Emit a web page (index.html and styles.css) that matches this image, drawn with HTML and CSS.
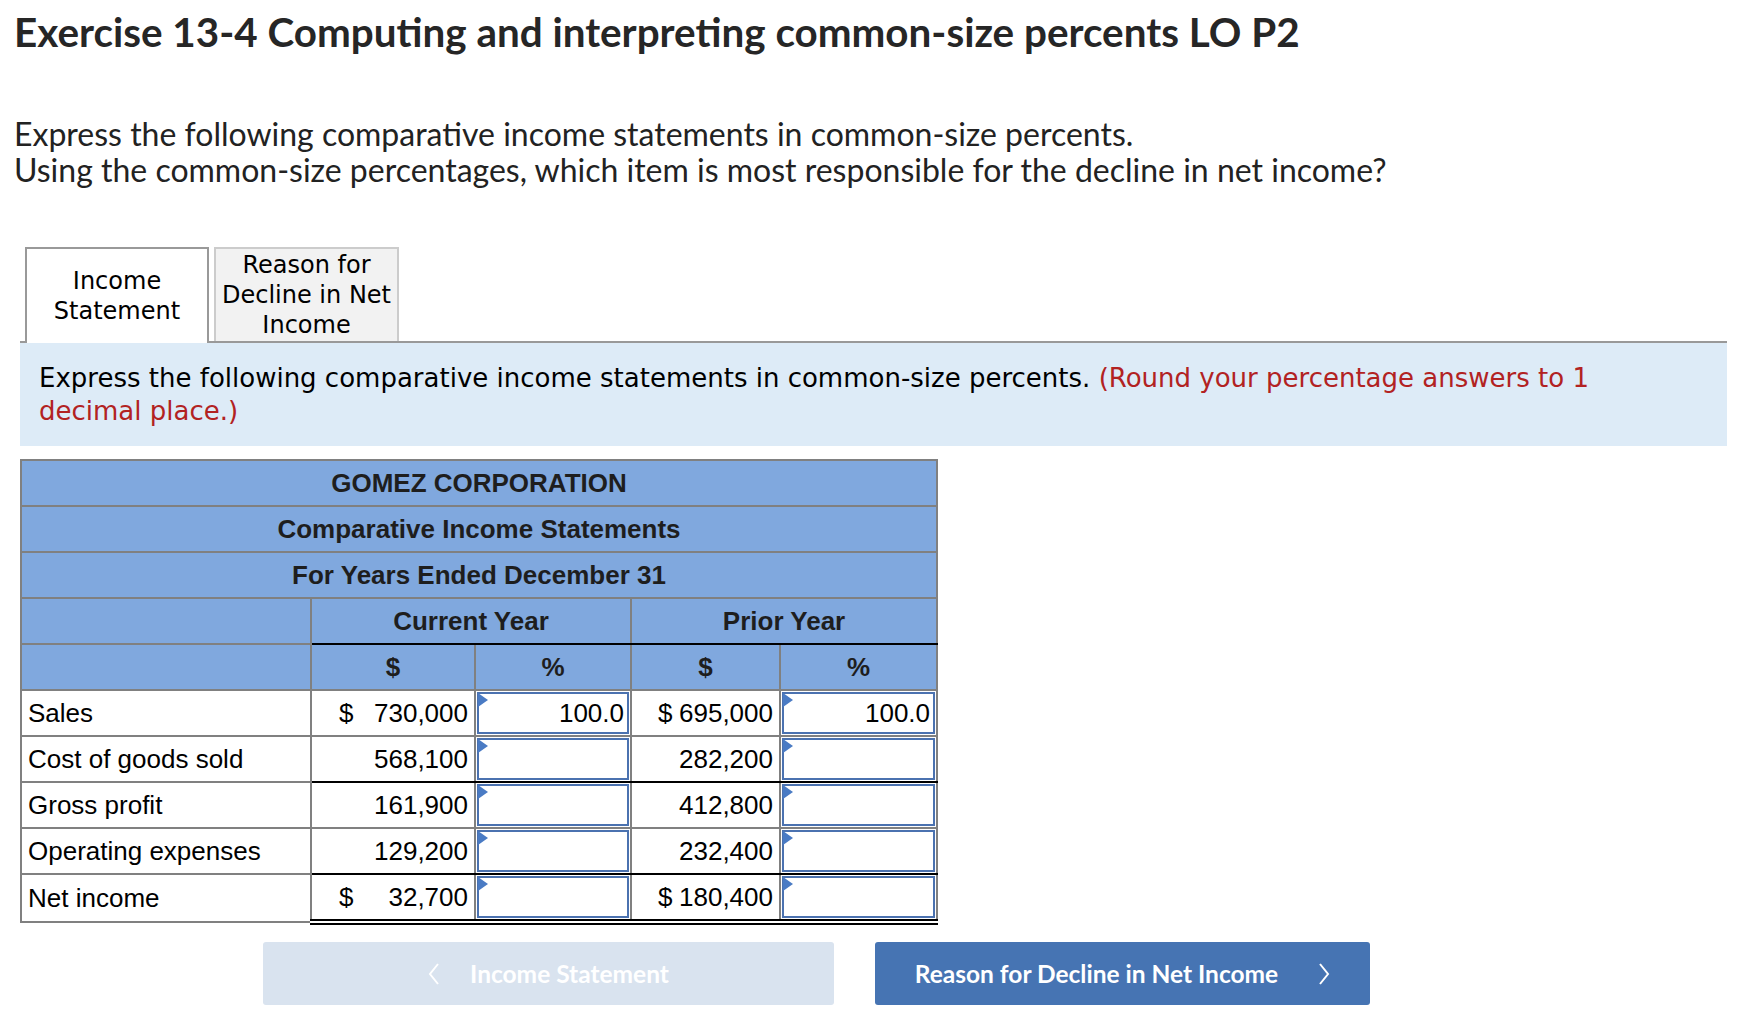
FILE: index.html
```html
<!DOCTYPE html>
<html lang="en">
<head>
    <meta charset="UTF-8">
    <title>Exercise 13-4 Computing and interpreting common-size percents</title>
    <link rel="stylesheet" href="styles.css">
</head>
<body>
    <div class="page">
        <h1 class="title">Exercise 13-4 Computing and interpreting common-size percents LO P2</h1>

        <div class="intro">
            <p>Express the following comparative income statements in common-size percents.</p>
            <p>Using the common-size percentages, which item is most responsible for the decline in net income?</p>
        </div>

        <div class="work">
            <div class="tabs">
                <div class="tab active">Income<br>Statement</div>
                <div class="tab idle">Reason for<br>Decline in Net<br>Income</div>
            </div>

            <div class="banner">
                Express the following comparative income statements in common-size percents.
                <span class="note">(Round your percentage answers to 1 decimal place.)</span>
            </div>

            <table class="stmt">
                <colgroup>
                    <col class="c-label">
                    <col class="c-amt">
                    <col class="c-pct">
                    <col class="c-amt2">
                    <col class="c-pct2">
                </colgroup>
                <tr><th colspan="5">GOMEZ CORPORATION</th></tr>
                <tr><th colspan="5">Comparative Income Statements</th></tr>
                <tr><th colspan="5">For Years Ended December 31</th></tr>
                <tr class="years">
                    <th></th>
                    <th colspan="2" class="yr">Current Year</th>
                    <th colspan="2" class="yr">Prior Year</th>
                </tr>
                <tr>
                    <th></th>
                    <th>$</th>
                    <th>%</th>
                    <th>$</th>
                    <th>%</th>
                </tr>
                <tr>
                    <td class="lbl">Sales</td>
                    <td class="amt"><div class="amt-in"><span>$</span><span class="num">730,000</span></div></td>
                    <td class="inp"><div class="box">100.0</div></td>
                    <td class="amt amt-tight"><div class="amt-in"><span>$</span><span class="num">695,000</span></div></td>
                    <td class="inp"><div class="box">100.0</div></td>
                </tr>
                <tr class="sub">
                    <td class="lbl">Cost of goods sold</td>
                    <td class="amt"><div class="amt-in"><span class="num">568,100</span></div></td>
                    <td class="inp"><div class="box"></div></td>
                    <td class="amt amt-tight"><div class="amt-in"><span class="num">282,200</span></div></td>
                    <td class="inp"><div class="box"></div></td>
                </tr>
                <tr>
                    <td class="lbl">Gross profit</td>
                    <td class="amt"><div class="amt-in"><span class="num">161,900</span></div></td>
                    <td class="inp"><div class="box"></div></td>
                    <td class="amt amt-tight"><div class="amt-in"><span class="num">412,800</span></div></td>
                    <td class="inp"><div class="box"></div></td>
                </tr>
                <tr class="sub">
                    <td class="lbl">Operating expenses</td>
                    <td class="amt"><div class="amt-in"><span class="num">129,200</span></div></td>
                    <td class="inp"><div class="box"></div></td>
                    <td class="amt amt-tight"><div class="amt-in"><span class="num">232,400</span></div></td>
                    <td class="inp"><div class="box"></div></td>
                </tr>
                <tr class="total">
                    <td class="lbl">Net income</td>
                    <td class="amt"><div class="amt-in"><span>$</span><span class="num">32,700</span></div></td>
                    <td class="inp"><div class="box"></div></td>
                    <td class="amt amt-tight"><div class="amt-in"><span>$</span><span class="num">180,400</span></div></td>
                    <td class="inp"><div class="box"></div></td>
                </tr>
            </table>
        </div>

        <div class="nav">
            <div class="btn prev">
                <svg class="chev" width="12" height="24" viewBox="0 0 12 24"><path d="M10 2 L2 12 L10 22" fill="none" stroke="#fff" stroke-width="2"/></svg>
                <span>Income Statement</span>
            </div>
            <div class="btn next">
                <span>Reason for Decline in Net Income</span>
                <svg class="chev" width="12" height="24" viewBox="0 0 12 24"><path d="M2 2 L10 12 L2 22" fill="none" stroke="#fff" stroke-width="2"/></svg>
            </div>
        </div>
    </div>
</body>
</html>
```

FILE: styles.css
```css
body {
    margin: 0;
    font-family: Lato, "Open Sans", sans-serif;
    color: #222;
    background-color: #fff;
}
.page {
    padding: 0 19px 0 14px;
}
.title {
    margin: 8px 0 0;
    font-size: 40.4px;
    line-height: 48px;
    font-weight: 700;
    color: #262626;
}
.intro {
    margin-top: 60px;
    font-size: 32px;
    line-height: 36px;
}
.intro p {
    margin: 0;
}
.work {
    margin: 59px 0 0 6px;
}
.tabs {
    display: flex;
    align-items: flex-end;
    gap: 5px;
    padding-left: 5px;
    border-bottom: 2px solid #999;
}
.tab {
    box-sizing: border-box;
    width: 184px;
    height: 94px;
    display: flex;
    align-items: center;
    justify-content: center;
    text-align: center;
    font-family: "DejaVu Sans", Verdana, sans-serif;
    font-size: 24px;
    line-height: 30px;
    color: #000;
}
.tab.active {
    height: 96px;
    margin-bottom: -2px;
    background-color: #fff;
    border: 2px solid #999;
    border-bottom: none;
}
.tab.idle {
    width: 185px;
    background-color: #f2f2f2;
    border: 2px solid #ccc;
    border-bottom: none;
}
.banner {
    background-color: #ddebf7;
    padding: 19px 60px 18px 19px;
    font-family: "DejaVu Sans", Verdana, sans-serif;
    font-size: 26px;
    line-height: 33px;
    color: #000;
}
.note {
    color: #b22222;
}
.stmt {
    margin-top: 13px;
    width: 916px;
    table-layout: fixed;
    border-collapse: collapse;
    font-family: "Liberation Sans", Arial, sans-serif;
    font-size: 26px;
    color: #000;
}
.c-label { width: 290px; }
.c-amt { width: 164px; }
.c-pct { width: 156px; }
.c-amt2 { width: 149px; }
.c-pct2 { width: 157px; }
.stmt th,
.stmt td {
    height: 44px;
    padding: 0;
    border: 2px solid #808080;
}
.stmt th {
    background-color: #80a8de;
    font-weight: 700;
    color: #1e1e1e;
    text-align: center;
}
.stmt .years .yr {
    border-bottom: 2px solid #000;
}
.stmt .lbl {
    padding-left: 6px;
    text-align: left;
}
.stmt .amt {
    padding: 0 6px 0 27px;
}
.stmt .amt-tight {
    padding-left: 26px;
}
.amt-in {
    display: flex;
    justify-content: space-between;
}
.amt-in .num {
    margin-left: auto;
}
.stmt .sub td:not(.lbl) {
    border-bottom: 2px solid #000;
}
.stmt .total td:not(.lbl) {
    border-bottom: 6px double #000;
}
.stmt .inp {
    padding: 0 1px;
}
.box {
    position: relative;
    box-sizing: border-box;
    height: 42px;
    border: 2px solid #4b72b0;
    background-color: #fff;
    padding-right: 3px;
    text-align: right;
    line-height: 38px;
}
.box::before {
    content: "";
    position: absolute;
    left: -1px;
    top: -1px;
    width: 0;
    height: 0;
    border-top: 7px solid transparent;
    border-bottom: 7px solid transparent;
    border-left: 10px solid #4a7bc4;
}
.nav {
    display: flex;
    gap: 41px;
    margin-top: 17px;
    padding-left: 249px;
}
.btn {
    height: 63px;
    border-radius: 3px;
    display: flex;
    align-items: center;
    justify-content: center;
    font-size: 24.5px;
    font-weight: 700;
    color: #fff;
}
.btn.prev {
    width: 571px;
    gap: 30px;
    background-color: #d9e3ef;
}
.btn.next {
    width: 495px;
    gap: 40px;
    background-color: #4674b3;
}
.chev {
    display: block;
}
```
